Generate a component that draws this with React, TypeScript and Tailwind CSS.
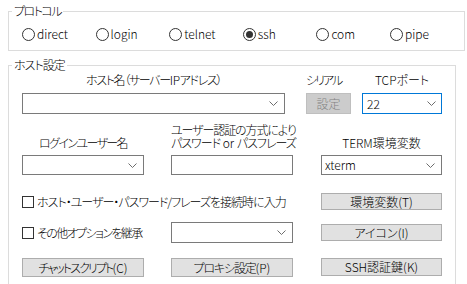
import React from "react";

function Chevron() {
  return (
    <svg width="9" height="5" viewBox="0 0 9 5" className="shrink-0">
      <polyline points="0.5,0.5 4.5,4.5 8.5,0.5" fill="none" stroke="#6d6d6d" strokeWidth="1" />
    </svg>
  );
}

function Radio({ label, checked }: { label: string; checked?: boolean }) {
  return (
    <div className="flex items-center w-[73.6px] shrink-0">
      <span className="w-[13px] h-[13px] rounded-full border border-[#333333] bg-white flex items-center justify-center">
        {checked && <span className="w-[7px] h-[7px] rounded-full bg-[#333333]" />}
      </span>
      <span className="ml-[2px] leading-[14px]">{label}</span>
    </div>
  );
}

function Checkbox({ children }: { children: React.ReactNode }) {
  return (
    <div className="flex items-center">
      <span className="w-[12px] h-[12px] border border-[#333333] bg-white shrink-0" />
      <span className="ml-[3px] leading-[14px] whitespace-nowrap">{children}</span>
    </div>
  );
}

const BTN = "border border-[#adadad] bg-[#e1e1e1] flex items-center justify-center leading-[14px] whitespace-nowrap";

export default function App() {
  return (
    <div className="w-[467px] h-[284px] bg-white overflow-hidden pt-[4px] text-[12px] font-light text-black font-['Noto_Sans_CJK_JP','Noto_Sans',sans-serif] [font-feature-settings:'palt']">
      <fieldset className="ml-[8px] w-[448px] border border-[#dcdcdc] pl-[3px] pb-[8px]">
        <legend className="px-[2px] leading-[14px] tracking-[-1.5px]">プロトコル</legend>
        <div className="flex items-center pl-[10px] mt-[8px] h-[16px]">
          <Radio label="direct" />
          <Radio label="login" />
          <Radio label="telnet" />
          <Radio label="ssh" checked />
          <Radio label="com" />
          <Radio label="pipe" />
        </div>
      </fieldset>

      <fieldset className="mt-[7px] ml-[8px] w-[448px] border border-[#dcdcdc] pl-[3px] pb-[20px]">
        <legend className="px-[2px] leading-[14px] tracking-[-1px]">ホスト設定</legend>
        <div className="pl-[10px]">
          {/* row 1 labels */}
          <div className="flex mt-[1px] h-[14px] leading-[14px] whitespace-nowrap">
            <div className="w-[263px] text-center">
              <span className="tracking-[-1.35px]">ホスト名（サーバー</span>
              <span className="tracking-[-0.3px]">IP</span>
              <span className="tracking-[-1.35px]">アドレス）</span>
            </div>
            <div className="ml-[21px] w-[45px] tracking-[-2px]">シリアル</div>
            <div className="ml-[11px] w-[80px] text-center">TCPポート</div>
          </div>
          {/* row 1 controls */}
          <div className="flex mt-[6px] h-[21px]">
            <div className="w-[263px] h-[21px] border border-[#7a7a7a] bg-white flex items-center justify-end pr-[6px]">
              <Chevron />
            </div>
            <div className="ml-[21px] w-[45px] h-[21px] border border-[#bfbfbf] bg-[#cccccc] text-[#838383] flex items-center justify-center">
              設定
            </div>
            <div className="ml-[11px] w-[80px] h-[21px] border border-[#0078d7] bg-white flex items-center justify-between pl-[4px] pr-[5px]">
              <span>22</span>
              <Chevron />
            </div>
          </div>
          {/* row 2 labels */}
          <div className="flex items-end mt-[9px] h-[26px] leading-[13px] whitespace-nowrap">
            <div className="w-[122px] text-center tracking-[-1.6px]">ログインユーザー名</div>
            <div className="ml-[27px] w-[122px] text-center">
              <div className="tracking-[-1.1px]">ユーザー認証の方式により</div>
              <div>
                <span className="tracking-[-1px]">パスワード</span>
                <span> or </span>
                <span className="tracking-[-1px]">パスフレーズ</span>
              </div>
            </div>
            <div className="ml-[28px] w-[121px] text-center">TERM環境変数</div>
          </div>
          {/* row 2 controls */}
          <div className="flex mt-[6px] h-[20px]">
            <div className="w-[122px] h-[20px] border border-[#7a7a7a] bg-white flex items-center justify-end pr-[6px]">
              <Chevron />
            </div>
            <div className="ml-[27px] w-[122px] h-[20px] border border-[#7a7a7a] bg-white" />
            <div className="ml-[28px] w-[121px] h-[20px] border border-[#7a7a7a] bg-white flex items-center justify-between pl-[3px] pr-[6px]">
              <span>xterm</span>
              <Chevron />
            </div>
          </div>
          {/* row 3 */}
          <div className="flex items-center mt-[18px] h-[17px]">
            <div className="w-[299px]">
              <Checkbox>
                <span className="tracking-[-1px]">ホスト・ユーザー・パスワード/フレーズを接続時に入力</span>
              </Checkbox>
            </div>
            <div className={"w-[121px] h-[17px] " + BTN}>環境変数(T)</div>
          </div>
          {/* row 4 */}
          <div className="flex items-center mt-[12px] h-[21px]">
            <div className="w-[149px]">
              <Checkbox>
                <span className="tracking-[-1.6px]">その他オプションを継承</span>
              </Checkbox>
            </div>
            <div className="w-[122px] h-[21px] border border-[#7a7a7a] bg-white flex items-center justify-end pr-[6px]">
              <Chevron />
            </div>
            <div className={"ml-[28px] w-[121px] h-[17px] " + BTN}>アイコン(I)</div>
          </div>
          {/* row 5 */}
          <div className="flex items-start mt-[15px] h-[19px]">
            <div className={"w-[122px] h-[19px] " + BTN}>
              <span className="tracking-[-1.9px]">チャットスクリプト</span>
              <span>(C)</span>
            </div>
            <div className={"ml-[27px] w-[122px] h-[19px] " + BTN}>
              <span className="tracking-[-1.2px]">プロキシ設定</span>
              <span>(P)</span>
            </div>
            <div className={"ml-[28px] w-[121px] h-[18px] " + BTN}>SSH認証鍵(K)</div>
          </div>
        </div>
      </fieldset>
    </div>
  );
}
